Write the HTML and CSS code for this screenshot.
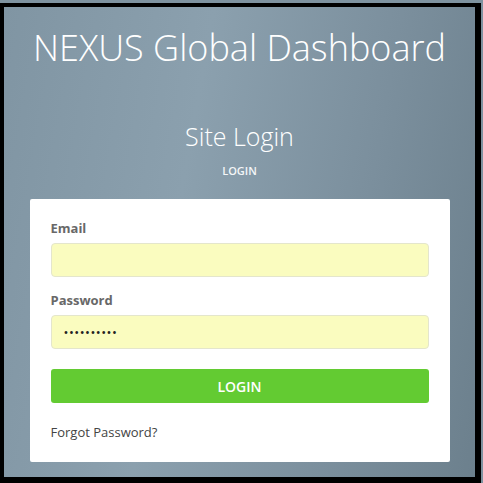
FILE: index.html
```html
<!DOCTYPE html>
<html lang="en">
<head>
    <meta charset="UTF-8">
    <meta name="viewport" content="width=device-width, initial-scale=1.0">
    <title>NEXUS Global Dashboard - Site Login</title>
    <link rel="stylesheet" href="styles.css">
</head>
<body>
    <div class="frame">
        <h1 class="brand">NEXUS Global Dashboard</h1>
        <h2 class="page-title">Site Login</h2>
        <div class="crumb">LOGIN</div>
        <form class="login-card" onsubmit="return false">
            <label for="email">Email</label>
            <input type="text" id="email" class="field">
            <label for="password">Password</label>
            <input type="password" id="password" class="field" value="secret1234">
            <button type="submit" class="btn-login">LOGIN</button>
            <a href="#" class="forgot">Forgot Password?</a>
        </form>
    </div>
</body>
</html>
```

FILE: styles.css
```css
html, body { margin: 0; padding: 0; }
body { font-family: "Open Sans", "Liberation Sans", Arial, sans-serif; background-color: #7f93a0; width: 483px; height: 483px; overflow: hidden; }
.frame { box-sizing: border-box; width: 481px; height: 480px; margin-top: 3px; border-style: solid; border-color: #000; border-width: 4px 6px 6px 4px; background: linear-gradient(100deg, #8095a3 0%, #8ba0ae 38%, #7b8f9d 72%, #6c808d 100%); overflow: hidden; }
.brand { margin: 20px 0 0; font-size: 36px; line-height: 42px; font-weight: 300; color: #fff; text-align: center; }
.page-title { margin: 52px 0 0; font-size: 25px; line-height: 30px; font-weight: 300; color: #fff; text-align: center; }
.crumb { margin-top: 12px; font-size: 11px; line-height: 15px; font-weight: 600; color: #f4f6f8; text-align: center; }
.login-card { display: flex; flex-direction: column; width: 420px; box-sizing: border-box; margin: 21px auto 0; padding: 20px 21px 21px; background-color: #fff; border-radius: 2px; }
.login-card label { font-size: 13px; line-height: 18px; font-weight: 700; color: #686868; margin-bottom: 6px; }
.field { box-sizing: border-box; height: 34px; width: 100%; margin: 0 0 14px; padding: 0 12px; background-color: #fafcbf; border: 1px solid #e4e6cc; border-radius: 4px; font-family: inherit; font-size: 13px; color: #222; outline: none; }
#password { margin-bottom: 20px; letter-spacing: 0.5px; }
.btn-login { height: 34px; border: none; border-radius: 3px; background-color: #63cb32; color: #fff; font-family: inherit; font-size: 14px; font-weight: 600; cursor: pointer; }
.forgot { margin-top: 20px; font-size: 13px; line-height: 18px; color: #444; text-decoration: none; align-self: flex-start; }
```
